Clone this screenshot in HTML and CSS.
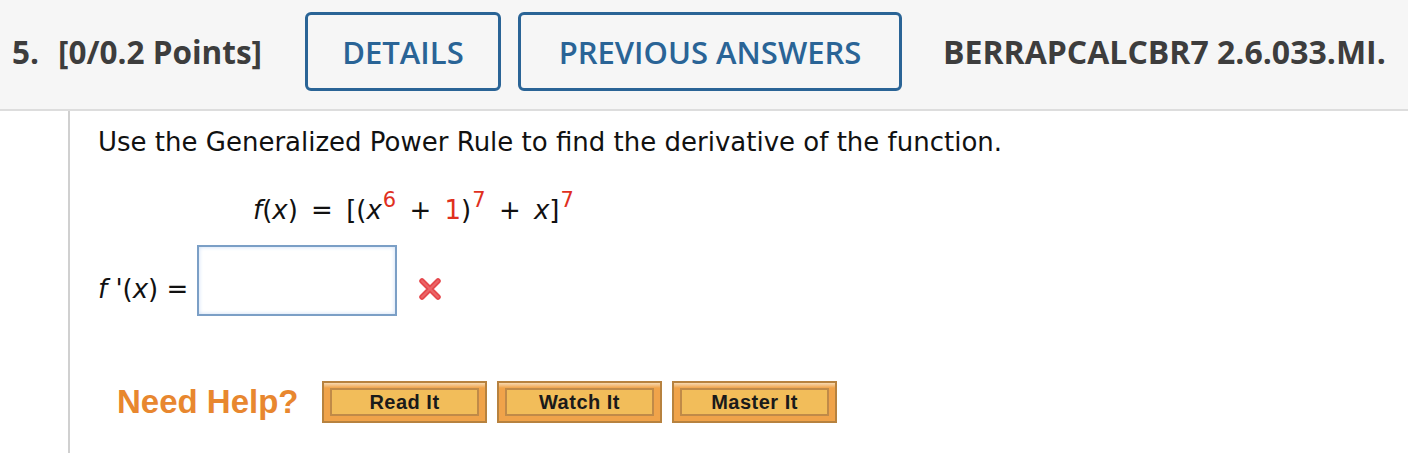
FILE: index.html
```html
<!DOCTYPE html>
<html>
<head>
<meta charset="utf-8">
<link rel="stylesheet" href="styles.css">
</head>
<body>
<div class="header">
  <div class="qnum"><span class="num">5.</span><span class="pts">[0/0.2 Points]</span></div>
  <div class="btn">DETAILS</div>
  <div class="btn prev">PREVIOUS ANSWERS</div>
  <div class="code">BERRAPCALCBR7 2.6.033.MI.</div>
</div>
<div class="content">
  <p class="prompt">Use the Generalized Power Rule to find the derivative of the function.</p>
  <p class="formula"><i>f</i>(<i>x</i>) = [(<i>x</i><sup class="red">6</sup> + <span class="red">1</span>)<sup class="red">7</sup> + <i>x</i>]<sup class="red">7</sup></p>
  <div class="answer">
    <span class="lhs"><i>f</i> '(<i>x</i>) =</span>
    <div class="inputbox"></div>
    <svg class="xmark" width="24" height="24" viewBox="0 0 24 24">
      <path d="M4 4 L20 20 M20 4 L4 20" stroke="#e5484d" stroke-width="5.5" stroke-linecap="round"/>
      <path d="M4 4 L20 20 M20 4 L4 20" stroke="#f07a7a" stroke-width="2" stroke-linecap="round" opacity="0.6"/>
    </svg>
  </div>
  <div class="help">
    <span class="needhelp">Need Help?</span>
    <div class="hbtn"><span>Read It</span></div>
    <div class="hbtn"><span>Watch It</span></div>
    <div class="hbtn"><span>Master It</span></div>
  </div>
</div>
</body>
</html>
```
FILE: styles.css
```css
html, body {
  margin: 0;
  padding: 0;
  background: #ffffff;
  height: 100%;
}
body {
  font-family: "Open Sans", sans-serif;
}
.header {
  background: #f6f6f6;
  border-bottom: 2px solid #dddddd;
  display: flex;
  align-items: center;
  padding-left: 12px;
  padding-bottom: 6px;
  box-sizing: border-box;
  height: 111px;
}
.qnum {
  font-weight: 700;
  font-size: 31.5px;
  color: #3d3d3d;
  display: flex;
  width: 251px;
  margin-right: 42px;
  white-space: nowrap;
}
.num {
  width: 46px;
  flex: none;
}
.btn {
  width: 196px;
  height: 79px;
  box-sizing: border-box;
  border: 3px solid #2a6496;
  border-radius: 6px;
  display: flex;
  align-items: center;
  justify-content: center;
  color: #2a6496;
  font-size: 31px;
  font-weight: 600;
  white-space: nowrap;
}
.prev {
  width: 384px;
  margin-left: 17px;
}
.code {
  margin-left: 41px;
  font-weight: 700;
  font-size: 32px;
  color: #3d3d3d;
  white-space: nowrap;
}
.content {
  margin-left: 68px;
  border-left: 2px solid #d0d0d0;
  padding-left: 28px;
  height: 342px;
  font-family: "DejaVu Sans", Verdana, sans-serif;
  color: #111;
  padding-top: 1px;
}
.prompt {
  margin: 14px 0 0 0;
  font-size: 26px;
  line-height: 32px;
  white-space: nowrap;
}
.formula {
  margin: 36px 0 0 155px;
  font-size: 26px;
  line-height: 32px;
  white-space: nowrap;
  word-spacing: 5px;
}
.formula sup {
  font-size: 21px;
  vertical-align: 0;
  position: relative;
  top: -12px;
  margin-left: 1px;
}
.red {
  color: #e0301e;
}
.answer {
  display: flex;
  align-items: flex-start;
  margin-top: 17px;
}
.lhs {
  font-size: 26px;
  line-height: 32px;
  width: 99px;
  margin-top: 28px;
  white-space: nowrap;
}
.inputbox {
  width: 200px;
  height: 71px;
  box-sizing: border-box;
  border: 2px solid #7b9fc6;
  box-shadow: inset 0 0 4px #c9dcf5;
  background: #fff;
}
.xmark {
  margin-left: 21px;
  margin-top: 32px;
}
.help {
  display: flex;
  align-items: center;
  margin-top: 65px;
  margin-left: 19px;
}
.needhelp {
  font-family: "Liberation Sans", Arial, sans-serif;
  font-weight: 700;
  font-size: 33px;
  color: #e8872f;
  width: 205px;
  white-space: nowrap;
}
.hbtn {
  width: 165px;
  height: 42px;
  box-sizing: border-box;
  border: 2px solid #b7823f;
  background: linear-gradient(#f8d9b0 0, #f0a34a 5px, #f0a34a 100%);
  padding: 5px 6px;
  margin-right: 10px;
}
.hbtn span {
  display: flex;
  align-items: center;
  justify-content: center;
  height: 100%;
  box-sizing: border-box;
  border: 2px solid #c08a48;
  background: #f2bd5a;
  font-family: "Liberation Sans", Arial, sans-serif;
  font-weight: 700;
  font-size: 20px;
  letter-spacing: 0.5px;
  color: #1a1a1a;
}
```
